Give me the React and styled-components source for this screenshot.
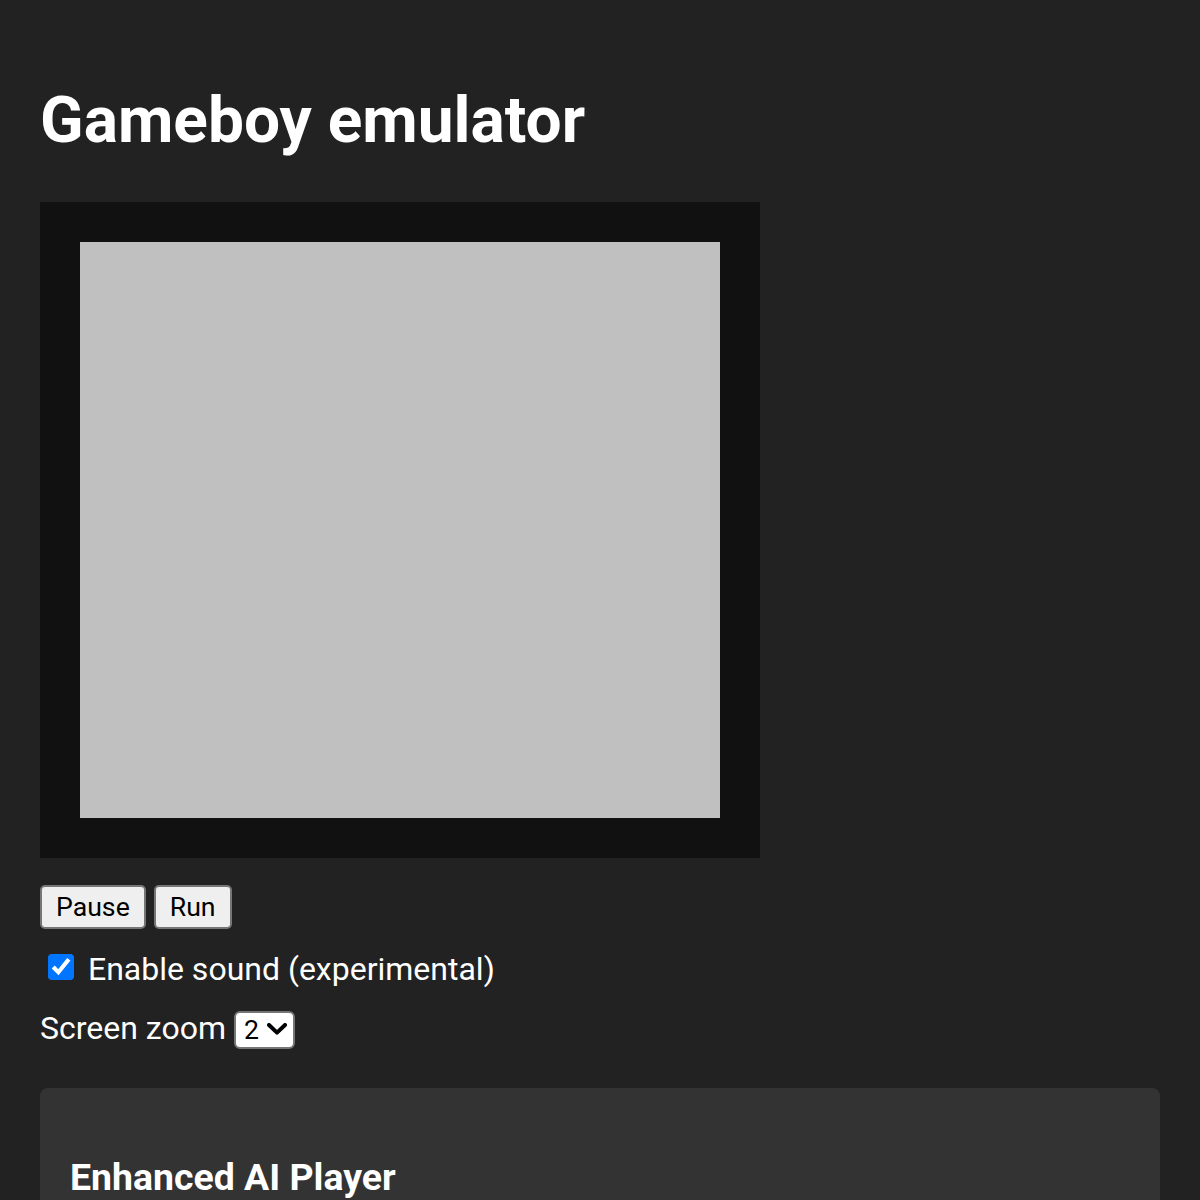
import React, { useState } from "react";
import styled, { createGlobalStyle } from "styled-components";

const GlobalStyle = createGlobalStyle`
  html {
    zoom: 2;
    background: #222;
  }
  body {
    margin: 0;
    padding: 20px;
    background: #222;
    color: #fff;
    font-family: Roboto, "Liberation Sans", Arial, sans-serif;
    font-size: 16px;
  }
`;

const Title = styled.h1`
  font-size: 32px;
  font-weight: 700;
  margin: 21.44px 0 22px;
`;

const ScreenFrame = styled.div`
  display: inline-block;
  padding: 20px;
  background: #111;
`;

const Screen = styled.div`
  width: ${(props) => 160 * props.zoom}px;
  height: ${(props) => 144 * props.zoom}px;
  background: #c0c0c0;
`;

const Row = styled.div`
  margin-top: ${(props) => props.top ?? 10}px;
`;

const Button = styled.button`
  font-family: Roboto, "Liberation Sans", Arial, sans-serif;
`;

const Check = styled.input`
  accent-color: #0075ff;
`;

const SelectWrap = styled.span`
  position: relative;
  display: inline-block;
  vertical-align: baseline;
`;

const Select = styled.select`
  appearance: none;
  -webkit-appearance: none;
  height: 19px;
  padding: 0 17px 0 4px;
  border: 1px solid #767676;
  border-radius: 3px;
  background: #fff;
  color: #000;
  font-family: Roboto, "Liberation Sans", Arial, sans-serif;
  font-size: 13.33px;
  line-height: 17px;
`;

const Chevron = styled.svg`
  position: absolute;
  right: 4px;
  top: 50%;
  margin-top: -3px;
  pointer-events: none;
`;

const Panel = styled.div`
  margin-top: 19.5px;
  padding: 15px;
  background: #333;
  border-radius: 4px;
`;

const PanelTitle = styled.h3`
  font-size: 18.72px;
  font-weight: 700;
  margin: 18.72px 0;
`;

export default function App() {
  const [sound, setSound] = useState(true);
  const [zoom, setZoom] = useState(2);

  return (
    <>
      <GlobalStyle />
      <Title>Gameboy emulator</Title>
      <div>
        <ScreenFrame>
          <Screen zoom={zoom} />
        </ScreenFrame>
      </div>
      <Row top={9.5}>
        <Button>Pause</Button> <Button>Run</Button>
      </Row>
      <Row top={9.5}>
        <label>
          <Check
            type="checkbox"
            checked={sound}
            onChange={(e) => setSound(e.target.checked)}
          />{" "}
          Enable sound (experimental)
        </label>
      </Row>
      <Row top={10.5}>
        Screen zoom{" "}
        <SelectWrap>
          <Select value={zoom} onChange={(e) => setZoom(Number(e.target.value))}>
            <option value={1}>1</option>
            <option value={2}>2</option>
            <option value={3}>3</option>
            <option value={4}>4</option>
          </Select>
          <Chevron width="10" height="6" viewBox="0 0 10 6">
            <path
              d="M1 1 L5 4.8 L9 1"
              fill="none"
              stroke="#000"
              strokeWidth="2"
              strokeLinecap="round"
              strokeLinejoin="round"
            />
          </Chevron>
        </SelectWrap>
      </Row>
      <Panel>
        <PanelTitle>Enhanced AI Player</PanelTitle>
        <p>Let the AI take over the controls.</p>
      </Panel>
    </>
  );
}
